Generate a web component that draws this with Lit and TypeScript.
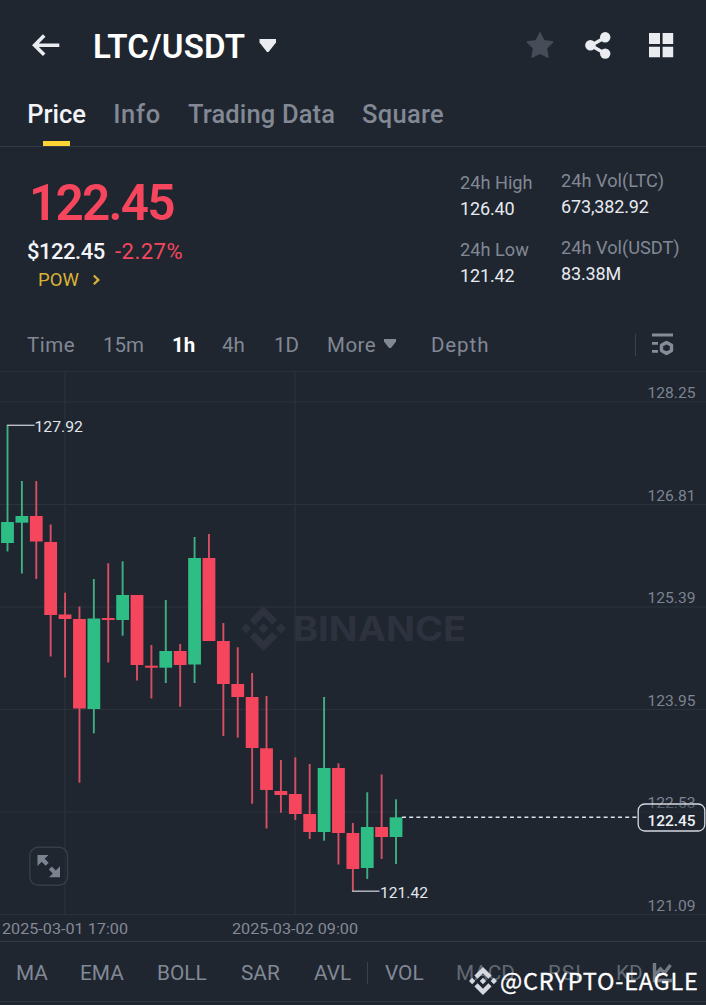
import { LitElement, html, svg, css } from "lit";
import { customElement } from "lit/decorators.js";

const LOGO =
  "M16.624 13.9202l2.7175 2.7154-7.353 7.353-7.353-7.352 2.7175-2.7164 4.6355 4.6595 4.6356-4.6595zm4.6366-4.6366L24 12l-2.7154 2.7164L18.5682 12l2.6924-2.7164zm-9.272.001l2.7163 2.6914-2.7164 2.7174v-.001L9.2721 12l2.7164-2.7154zm-9.2722-.001L5.4088 12l-2.6914 2.6924L0 12l2.7164-2.7164zM11.9885.0115l7.353 7.329-2.7174 2.7154-4.6356-4.6356-4.6355 4.6595-2.7174-2.7154 7.353-7.353z";

// direction, wick top, body top, body bottom, wick bottom
type Candle = ["g" | "r", number, number, number, number];
const CANDLES: Candle[] = [
  ["g", 425, 522, 543, 551.5],
  ["g", 481, 516, 522.7, 573.5],
  ["r", 481, 516, 541.5, 579],
  ["r", 524.5, 542, 615, 656.5],
  ["r", 592.7, 614.5, 619, 677.5],
  ["r", 606.5, 619, 708.5, 782.7],
  ["g", 579, 618.5, 709, 733.3],
  ["r", 563.3, 618, 620, 662.5],
  ["g", 561.3, 595, 620, 635.7],
  ["r", 595, 595, 665, 680.5],
  ["r", 645, 665.7, 667.7, 698.5],
  ["g", 600, 651, 667.7, 683],
  ["r", 644, 651, 665, 706.7],
  ["g", 537, 558, 664.5, 683],
  ["r", 534, 558, 641, 641],
  ["r", 623, 641, 684, 736],
  ["r", 647.3, 684, 697, 737.7],
  ["r", 673, 697, 748, 803.7],
  ["r", 696, 748.3, 790, 828.5],
  ["r", 760, 791, 795, 812.7],
  ["r", 757.3, 794, 814, 820],
  ["r", 764, 814, 832, 839],
  ["g", 697, 768, 832, 840.7],
  ["r", 763.3, 768, 833, 864.5],
  ["r", 823, 833, 869, 891],
  ["g", 792.3, 827, 868, 879],
  ["r", 774.5, 827, 837, 859],
  ["g", 799.3, 817.3, 837, 864],
];

const LEVELS: [string, number][] = [
  ["128.25", 402],
  ["126.81", 504.5],
  ["125.39", 607],
  ["123.95", 709.5],
  ["122.53", 812],
  ["121.09", 914.5],
];

@customElement("price-chart")
class PriceChart extends LitElement {
  static styles = css`
    :host { display: block; }
    svg { display: block; font-family: Roboto, "Liberation Sans", sans-serif; }
    .grid { stroke: #2b323c; stroke-width: 1.2; }
    .edge { fill: #2a303b; }
    .g { fill: #2ebd85; }
    .r { fill: #f6465d; }
    .wick.g { fill: #3fae83; }
    .wick.r { fill: #d84e63; }
    .axis { fill: #7d838f; font-size: 15.5px; }
    .date { fill: #858a96; font-size: 15.5px; }
    .mark { fill: #e3e6ee; font-size: 15.5px; }
    .lead { stroke: #b9bec8; stroke-width: 1.4; }
    .wm { fill: #2d323e; }
    .brand { font: 700 33.5px Inter, Lato, sans-serif; }
    .dash { stroke: #dfe2e9; stroke-width: 1.4; stroke-dasharray: 4 3.2; }
    .tag { fill: #1f2630; fill-opacity: 0.4; stroke: #d5d8e0; stroke-width: 1.3; }
    .now { fill: #eef0f5; font-size: 15.5px; font-weight: 500; }
    .btn { fill: #1f2630; fill-opacity: 0.6; stroke: #383e49; stroke-width: 1.4; }
    .arrow { fill: #7b8290; }
  `;

  render() {
    return html`<svg width="706" height="570" viewBox="0 371 706 570">
      <rect class="edge" x="0" y="370.6" width="706" height="1.6" />
      ${LEVELS.map(([, y]) => svg`<line class="grid" x1="0" x2="706" y1=${y} y2=${y} />`)}
      <line class="grid" x1="65" x2="65" y1="372" y2="914" />
      <line class="grid" x1="295" x2="295" y1="372" y2="914" />
      <g class="wm" transform="translate(241 606) scale(1.875)"><path d=${LOGO} /></g>
      <text class="wm brand" x="293" y="640.5" textLength="173" lengthAdjust="spacingAndGlyphs">BINANCE</text>
      ${CANDLES.map(([k, hi, top, bottom, lo], i) => {
        const x = 7.5 + i * 14.39;
        return svg`<rect class="wick ${k}" x=${x - 0.95} y=${hi} width="1.9" height=${lo - hi} />
          <rect class=${k} x=${x - 6.4} y=${top} width="12.8" height=${bottom - top} />`;
      })}
      <line class="lead" x1="7" x2="34.5" y1="425.3" y2="425.3" />
      <text class="mark" x="34.5" y="431.8" textLength="48.5" lengthAdjust="spacingAndGlyphs">127.92</text>
      <line class="lead" x1="352" x2="379.5" y1="891.2" y2="891.2" />
      <text class="mark" x="380" y="897.5" textLength="48" lengthAdjust="spacingAndGlyphs">121.42</text>
      ${LEVELS.map(
        ([t, y]) => svg`<text class="axis" x="647.5" y=${y - 3.7} textLength="48" lengthAdjust="spacingAndGlyphs">${t}</text>`
      )}
      <line class="dash" x1="402" x2="638" y1="817.3" y2="817.3" />
      <rect class="tag" x="638.2" y="804" width="66.6" height="27" rx="6.5" />
      <text class="now" x="647.5" y="825.6" textLength="48" lengthAdjust="spacingAndGlyphs">122.45</text>
      <rect class="btn" x="29.8" y="847.3" width="37.8" height="38" rx="8.5" />
      <path class="arrow" d="M37.5 855h11l-3.8 3.8 4 4-3 3-4-4-4.2 4.2zM60 877.3h-11l3.8-3.8-4-4 3-3 4 4 4.2-4.2z" />
      <text class="date" x="2" y="934" textLength="126" lengthAdjust="spacingAndGlyphs">2025-03-01 17:00</text>
      <text class="date" x="232" y="934" textLength="126" lengthAdjust="spacingAndGlyphs">2025-03-02 09:00</text>
    </svg>`;
  }
}

@customElement("app-root")
class AppRoot extends LitElement {
  static styles = css`
    :host {
      display: block;
      position: relative;
      width: 706px;
      height: 1005px;
      overflow: hidden;
      background: #1f2630;
      color: #828894;
      font-family: Roboto, "Liberation Sans", sans-serif;
      white-space: nowrap;
    }
    * { box-sizing: border-box; }
    svg { display: block; flex: none; }
    .top { display: flex; align-items: center; height: 92px; padding: 0 31px 0 31px; }
    .title { margin-left: 32px; color: #fff; font-size: 33px; font-weight: 600; letter-spacing: 0.2px; line-height: 40px; padding-top: 2px; width: 166px; }
    .actions { display: flex; align-items: center; gap: 31px; margin-left: auto; }
    .grid { margin-left: 1px; }
    .tabs { display: flex; height: 55px; border-bottom: 1px solid #333a45; padding-left: 28px; font-size: 25.5px; font-weight: 500; line-height: 44px; }
    .tab { display: flex; flex-direction: column; align-items: center; justify-content: space-between; }
    .tab.on { color: #f3f4f7; }
    .tab.on::after { content: ""; width: 27px; height: 5px; background: #fcd535; }
    .t0 { width: 57px; margin-right: 28px; }
    .t1 { width: 48px; margin-right: 27px; letter-spacing: 0.7px; }
    .t2 { width: 147px; margin-right: 27px; letter-spacing: 0.15px; }
    .t3 { width: 82px; letter-spacing: 0.3px; }
    .summary { display: flex; height: 170px; padding: 26px 0 0 28px; }
    .left { width: 432px; }
    .last { color: #f6465d; font-size: 49.5px; font-weight: 600; line-height: 60px; letter-spacing: -1.8px; padding-left: 1px; }
    .fiat { display: flex; font-size: 22px; line-height: 26px; margin-top: 6px; font-weight: 500; color: #f3f4f7; }
    .usd { width: 88px; margin-left: -1px; letter-spacing: -0.5px; }
    .chg { color: #f6465d; font-weight: 400; letter-spacing: 0.5px; }
    .tagrow { display: flex; align-items: center; gap: 13px; padding-left: 10px; color: #d9b236; font-size: 18.5px; line-height: 22px; margin-top: 4px; }
    .col { display: flex; flex-direction: column; gap: 14px; margin-top: -5px; }
    .high { width: 101px; padding-top: 2px; }
    .stat { font-size: 18.2px; line-height: 26px; }
    .val { color: #e7eaef; line-height: 26.5px; font-size: 18px; letter-spacing: -0.15px; }
    .intervals { display: flex; align-items: center; height: 54px; padding: 1px 0 0 27px; font-size: 20.5px; }
    .i0 { width: 76px; letter-spacing: 0.5px; } .i1 { width: 69px; } .i2 { width: 50px; } .i3 { width: 52px; }
    .i4 { width: 53px; } .i5 { width: 56px; letter-spacing: 0.5px; } .i6 { width: 48px; }
    .i7 { letter-spacing: 0.9px; }
    .sel { color: #fff; font-weight: 700; }
    .rule { width: 1px; height: 22px; background: #3a414c; }
    .r1 { margin: 0 15px 0 auto; }
    .indicators { display: flex; align-items: center; height: 61px; border-top: 1px solid #353c47; border-bottom: 1px solid #2f3641; padding: 3px 0 0 16px; font-size: 20.8px; }
    .n0 { width: 64px; } .n1 { width: 77px; } .n2 { width: 84px; } .n3 { width: 73px; }
    .n4 { width: 53px; } .n5 { width: 71px; } .n6 { width: 92px; } .n7 { width: 68px; letter-spacing: 1px; } .n8 { width: 36px; }
    .r2 { margin-right: 17px; }
    .dim { color: #626975; }
    .credit { position: absolute; left: 469px; top: 967px; display: flex; align-items: center; gap: 3px; color: #fff; }
    .handle { font: 400 23.5px/26px "Noto Sans CJK SC", "Noto Sans", sans-serif; letter-spacing: 0.78px; margin-top: -2px; -webkit-text-stroke: 0.3px #fff; }
  `;

  render() {
    const names = ["MA", "EMA", "BOLL", "SAR", "AVL"];
    const subs = ["VOL", "MACD", "RSI", "KD"];
    return html`
      <div class="top">
        <svg width="30" height="24" viewBox="0 0 30 24" fill="none" stroke="#eaecef" stroke-width="3.6">
          <path d="M28.3 11.2H4M13.2 1.6 3.6 11.2l9.6 9.6" />
        </svg>
        <div class="title">LTC/USDT</div>
        <svg width="18" height="14" viewBox="0 0 18 14" fill="#eaecef"><path d="M.5 0h16.5v3.5L9.5 13h-1.5L.5 3.5z" /></svg>
        <div class="actions">
          <svg width="28" height="28" viewBox="0 0 28 28" fill="#464c58" stroke="#464c58" stroke-width="1.6" stroke-linejoin="round">
            <path d="m14 1 3.9 7.8 8.6 1.3-6.2 6.1 1.5 8.8-7.8-4-7.8 4 1.5-8.8-6.2-6.1 8.6-1.3z" />
          </svg>
          <svg width="28" height="28" viewBox="0 0 28 28" fill="#eaecef">
            <path d="M20 5.5 6 13.5 20 21.5" fill="none" stroke="#eaecef" stroke-width="3.4" />
            <circle cx="20.2" cy="5.2" r="5.2" /><circle cx="5.4" cy="13.3" r="5.2" /><circle cx="20.2" cy="21.6" r="5.2" />
          </svg>
          <svg class="grid" width="30" height="26" viewBox="0 0 30 26" fill="#eaecef">
            <path d="M4 0h11v11H4zM17.6 0h10.6v11h-10.6zM4 13.7h11v10.6H4zM17.6 13.7h10.6v10.6h-10.6z" />
          </svg>
        </div>
      </div>
      <div class="tabs">
        <div class="tab on t0">Price</div><div class="tab t1">Info</div>
        <div class="tab t2">Trading Data</div><div class="tab t3">Square</div>
      </div>
      <div class="summary">
        <div class="left">
          <div class="last">122.45</div>
          <div class="fiat"><span class="usd">$122.45</span><span class="chg">-2.27%</span></div>
          <div class="tagrow">
            <span>POW</span>
            <svg width="9" height="12" viewBox="0 0 9 12" fill="none" stroke="#d9b236" stroke-width="2.2"><path d="m1.8 1.5 4.6 4.4-4.6 4.4" /></svg>
          </div>
        </div>
        <div class="col high">
          <div class="stat">24h High<div class="val">126.40</div></div>
          <div class="stat">24h Low<div class="val">121.42</div></div>
        </div>
        <div class="col">
          <div class="stat">24h Vol(LTC)<div class="val">673,382.92</div></div>
          <div class="stat">24h Vol(USDT)<div class="val">83.38M</div></div>
        </div>
      </div>
      <div class="intervals">
        <span class="i0">Time</span><span class="i1">15m</span><span class="i2 sel">1h</span><span class="i3">4h</span>
        <span class="i4">1D</span><span class="i5">More</span>
        <span class="i6"><svg width="14" height="12" viewBox="0 0 14 12" fill="#828894"><path d="M1 0h12v2.5L8 9H6L1 2.5z" /></svg></span>
        <span class="i7">Depth</span>
        <span class="rule r1"></span>
        <svg width="55" height="24" viewBox="0 0 55 24" fill="#868c98">
          <path d="M1 .5h21v3H1zM1 9h6v2.8H1zM1 17h6v2.8H1z" />
          <path d="m15.5 9.4 5 2.8v5.4l-5 2.8-5-2.8v-5.4z" fill="none" stroke="#868c98" stroke-width="3.4" stroke-linejoin="round" />
        </svg>
      </div>
      <price-chart></price-chart>
      <div class="indicators">
        ${names.map((n, i) => html`<span class="n${i}">${n}</span>`)}
        <span class="rule r2"></span>
        ${subs.map((n, i) => html`<span class="n${i + 5} ${i > 0 ? "dim" : ""}">${n}</span>`)}
        <svg width="22" height="22" viewBox="0 0 22 22" fill="none" stroke="#737985" stroke-width="3.4"><path d="M2.5 1v17.5H20M4 12l4.5-5 4 4L18.5 3" /></svg>
      </div>
      <div class="credit">
        <svg width="28" height="28" viewBox="0 0 24 24" fill="#d5d8de"><path d=${LOGO} /></svg>
        <span class="handle">@CRYPTO-EAGLE</span>
      </div>
    `;
  }
}
